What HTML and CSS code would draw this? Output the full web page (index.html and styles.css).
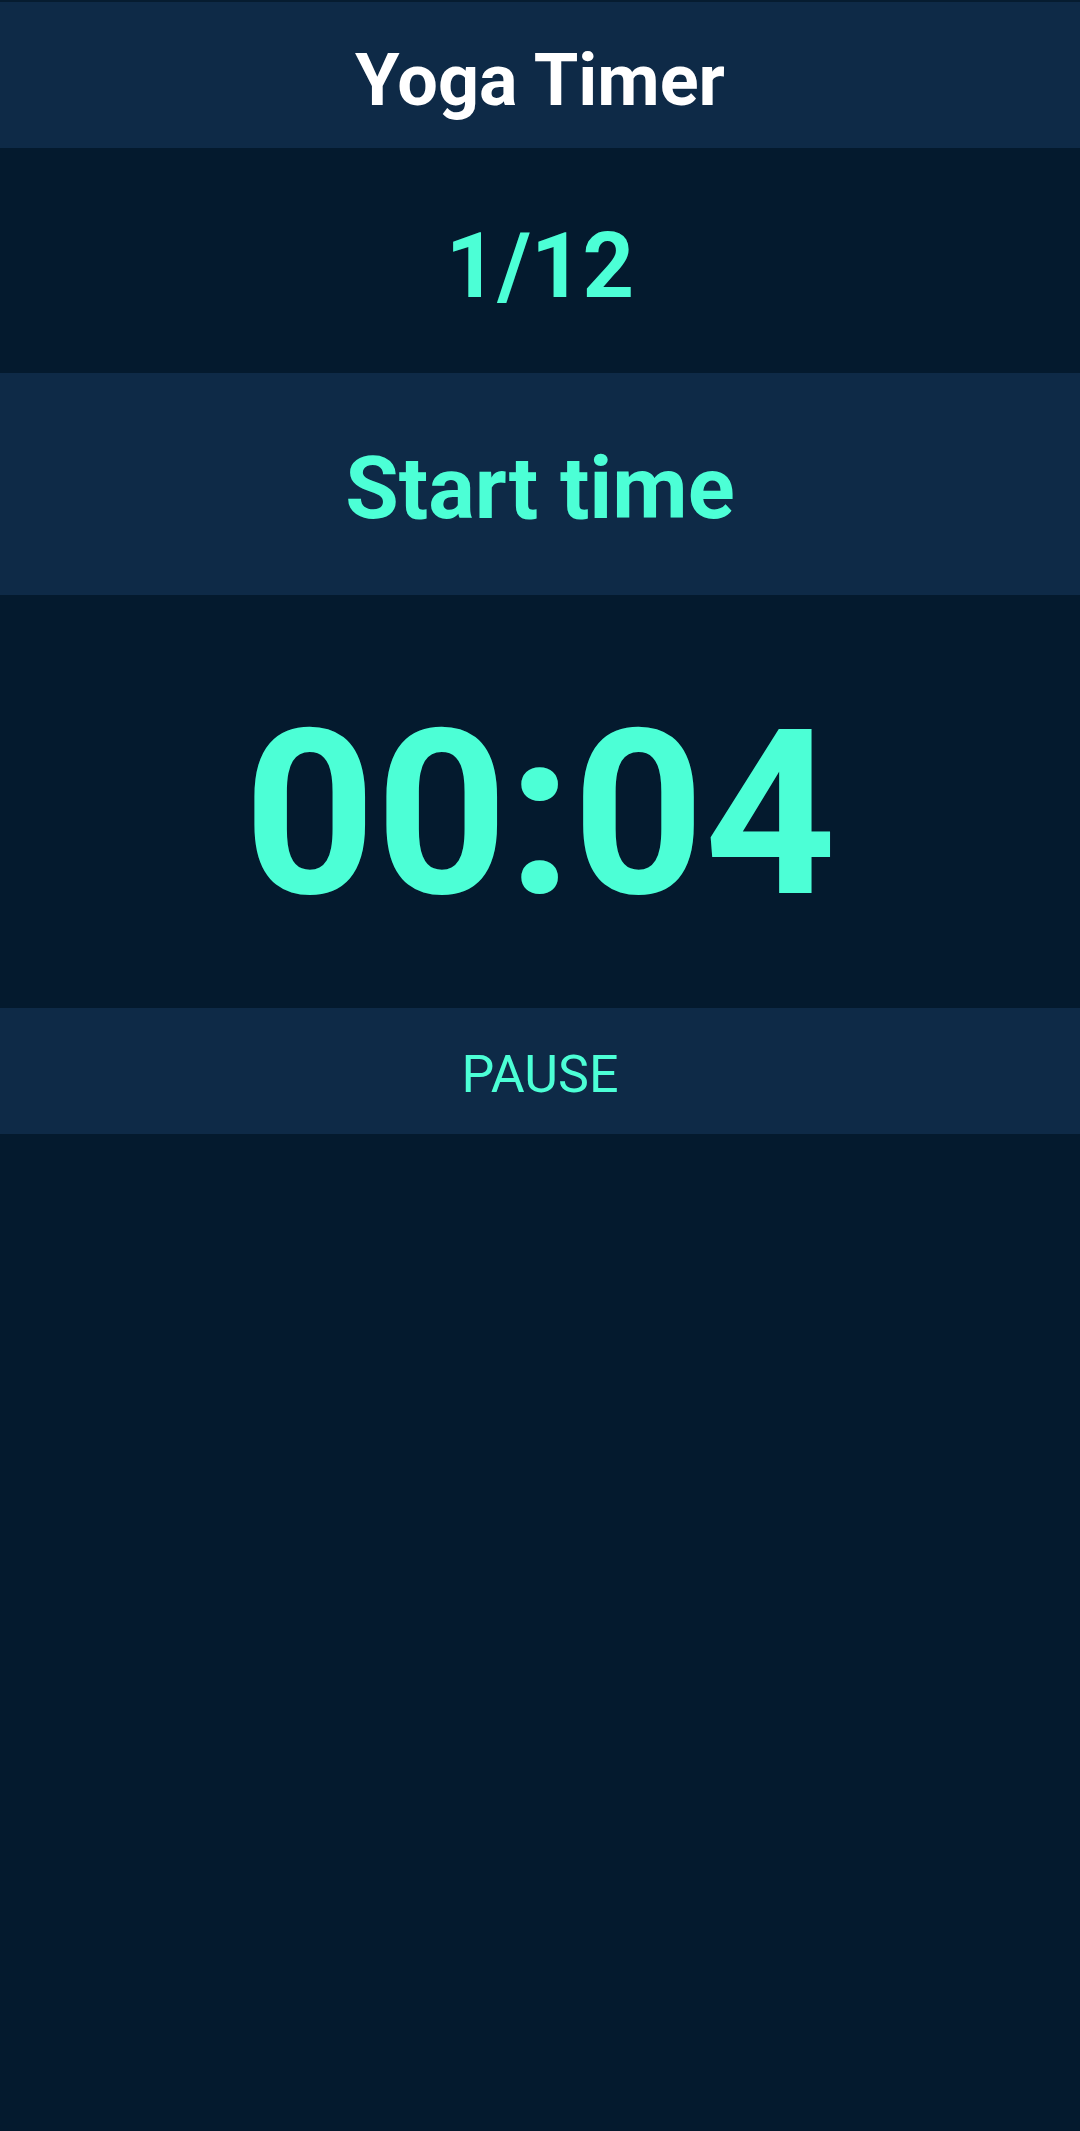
FILE: index.html
```html
<!DOCTYPE html>
<html>
<head>
<meta charset="utf-8">
<link rel="stylesheet" href="styles.css">
</head>
<body>
<div class="app">
  <div class="statusbar"></div>
  <header class="toolbar"><h1 class="title">Yoga Timer</h1></header>
  <section class="row counter"><span>1/12</span></section>
  <section class="row pose"><span>Start time</span></section>
  <section class="row clock"><span>00:04</span></section>
  <button class="row pause">PAUSE</button>
</div>
</body>
</html>
```
FILE: styles.css
```css
html, body {
  margin: 0;
  padding: 0;
  background: #041a2e;
}
.app {
  width: 1080px;
  min-height: 2131px;
  display: flex;
  flex-direction: column;
  background: #041a2e;
  font-family: Roboto, "Noto Sans", sans-serif;
  color: #4cffd6;
}
.statusbar {
  height: 2px;
  background: #061c30;
}
.toolbar {
  box-sizing: border-box;
  height: 146px;
  padding-top: 10px;
  background: #0e2a47;
  display: flex;
  align-items: center;
  justify-content: center;
}
.title {
  margin: 0;
  color: #ffffff;
  font-size: 72px;
  font-weight: 700;
}
.row {
  box-sizing: border-box;
  display: flex;
  align-items: center;
  justify-content: center;
  font-weight: 700;
}
.counter {
  height: 225px;
  padding-top: 12px;
  font-size: 90px;
}
.pose {
  height: 222px;
  padding-top: 8px;
  background: #0e2a47;
  font-size: 87px;
}
.clock {
  height: 413px;
  padding-top: 26px;
  font-size: 230px;
}
.pause {
  height: 126px;
  border: 0;
  margin: 0;
  padding: 6px 0 0;
  width: 100%;
  background: #0e2a47;
  color: #4cffd6;
  font-family: Roboto, "Noto Sans", sans-serif;
  font-size: 52px;
  font-weight: 400;
}
```
